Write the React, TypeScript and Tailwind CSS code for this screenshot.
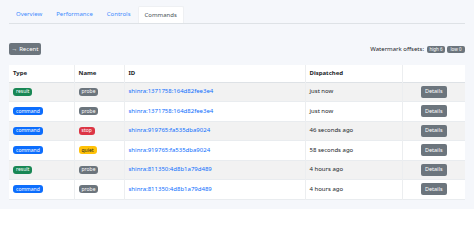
import React from "react";

type Row = {
  type: "result" | "command";
  name: "probe" | "stop" | "quiet";
  id: string;
  when: string;
};

const rows: Row[] = [
  { type: "result", name: "probe", id: "shinra:1371758:164d82fee3e4", when: "just now" },
  { type: "command", name: "probe", id: "shinra:1371758:164d82fee3e4", when: "just now" },
  { type: "command", name: "stop", id: "shinra:919765:fa535dba9024", when: "46 seconds ago" },
  { type: "command", name: "quiet", id: "shinra:919765:fa535dba9024", when: "58 seconds ago" },
  { type: "result", name: "probe", id: "shinra:811350:4d8b1a79d489", when: "4 hours ago" },
  { type: "command", name: "probe", id: "shinra:811350:4d8b1a79d489", when: "4 hours ago" },
];

const typeColor: Record<Row["type"], string> = {
  result: "bg-[#198754] text-white",
  command: "bg-[#0d6efd] text-white",
};

const nameColor: Record<Row["name"], string> = {
  probe: "bg-[#6c757d] text-white",
  stop: "bg-[#dc3545] text-white",
  quiet: "bg-[#ffc107] text-[#212529]",
};

function Badge({ className, children }: { className: string; children: React.ReactNode }) {
  return (
    <span className={`inline-flex h-[8px] items-center rounded-[3px] px-[3px] text-[5px] leading-none ${className}`}>
      {children}
    </span>
  );
}

export default function App() {
  const tabs = ["Overview", "Performance", "Controls", "Commands"];

  return (
    <div
      className="w-[474px] h-[209px] overflow-hidden bg-[#f5f7fb] px-[9px] pt-[6px] text-[#212529]"
      style={{ fontFamily: '"Noto Sans", "Open Sans", sans-serif' }}
    >
      <div className="flex border-b border-[#dee2e6]">
        {tabs.map((t) => (
          <div
            key={t}
            className={
              t === "Commands"
                ? "h-[17px] px-[6px] flex items-center text-[6px] bg-white text-[#495057] rounded-t-[2px] -mb-px border-x border-t border-[#eef0f3]"
                : "h-[17px] px-[7px] flex items-center text-[6px] text-[#3d8bfd]"
            }
          >
            {t}
          </div>
        ))}
      </div>

      <div className="mt-[19px] flex items-center justify-between">
        <button className="h-[12px] w-[32px] rounded-[2px] bg-[#6c757d] text-[6px] text-white leading-none">
          → Recent
        </button>
        <div className="flex items-center gap-[2px] text-[6px]">
          <span className="mr-[1px]">Watermark offsets:</span>
          <span className="inline-flex h-[7px] w-[18px] items-center justify-center rounded-[2px] bg-[#6c757d] text-[4.5px] text-white">
            high 6
          </span>
          <span className="inline-flex h-[7px] w-[18px] items-center justify-center rounded-[2px] bg-[#6c757d] text-[4.5px] text-white">
            low 0
          </span>
        </div>
      </div>

      <table className="mt-[10px] w-[456px] border-collapse bg-white text-[6px]">
        <colgroup>
          <col className="w-[65px]" />
          <col className="w-[50px]" />
          <col className="w-[181px]" />
          <col className="w-[97px]" />
          <col className="w-[63px]" />
        </colgroup>
        <thead>
          <tr className="h-[17px] border-b border-[#dee2e6]">
            <th className="px-[4px] text-left font-bold border-r border-[#eceef0]">Type</th>
            <th className="px-[4px] text-left font-bold border-r border-[#eceef0]">Name</th>
            <th className="px-[4px] text-left font-bold border-r border-[#eceef0]">ID</th>
            <th className="px-[4px] text-left font-bold border-r border-[#eceef0]">Dispatched</th>
            <th></th>
          </tr>
        </thead>
        <tbody>
          {rows.map((r, i) => (
            <tr
              key={i}
              className={`h-[19.5px] border-b border-[#e9ecef] ${i % 2 === 0 ? "bg-[#f2f2f2]" : "bg-white"}`}
            >
              <td className="px-[4px] border-r border-[#eceef0]">
                <Badge className={typeColor[r.type]}>{r.type}</Badge>
              </td>
              <td className="px-[4px] border-r border-[#eceef0]">
                <Badge className={nameColor[r.name]}>{r.name}</Badge>
              </td>
              <td className="px-[4px] border-r border-[#eceef0] text-[#0d6efd]">{r.id}</td>
              <td className="px-[4px] border-r border-[#eceef0]">{r.when}</td>
              <td className="text-center">
                <button className="h-[12px] w-[26px] rounded-[2px] bg-[#6c757d] text-[5.5px] text-white leading-none">
                  Details
                </button>
              </td>
            </tr>
          ))}
        </tbody>
      </table>
    </div>
  );
}
